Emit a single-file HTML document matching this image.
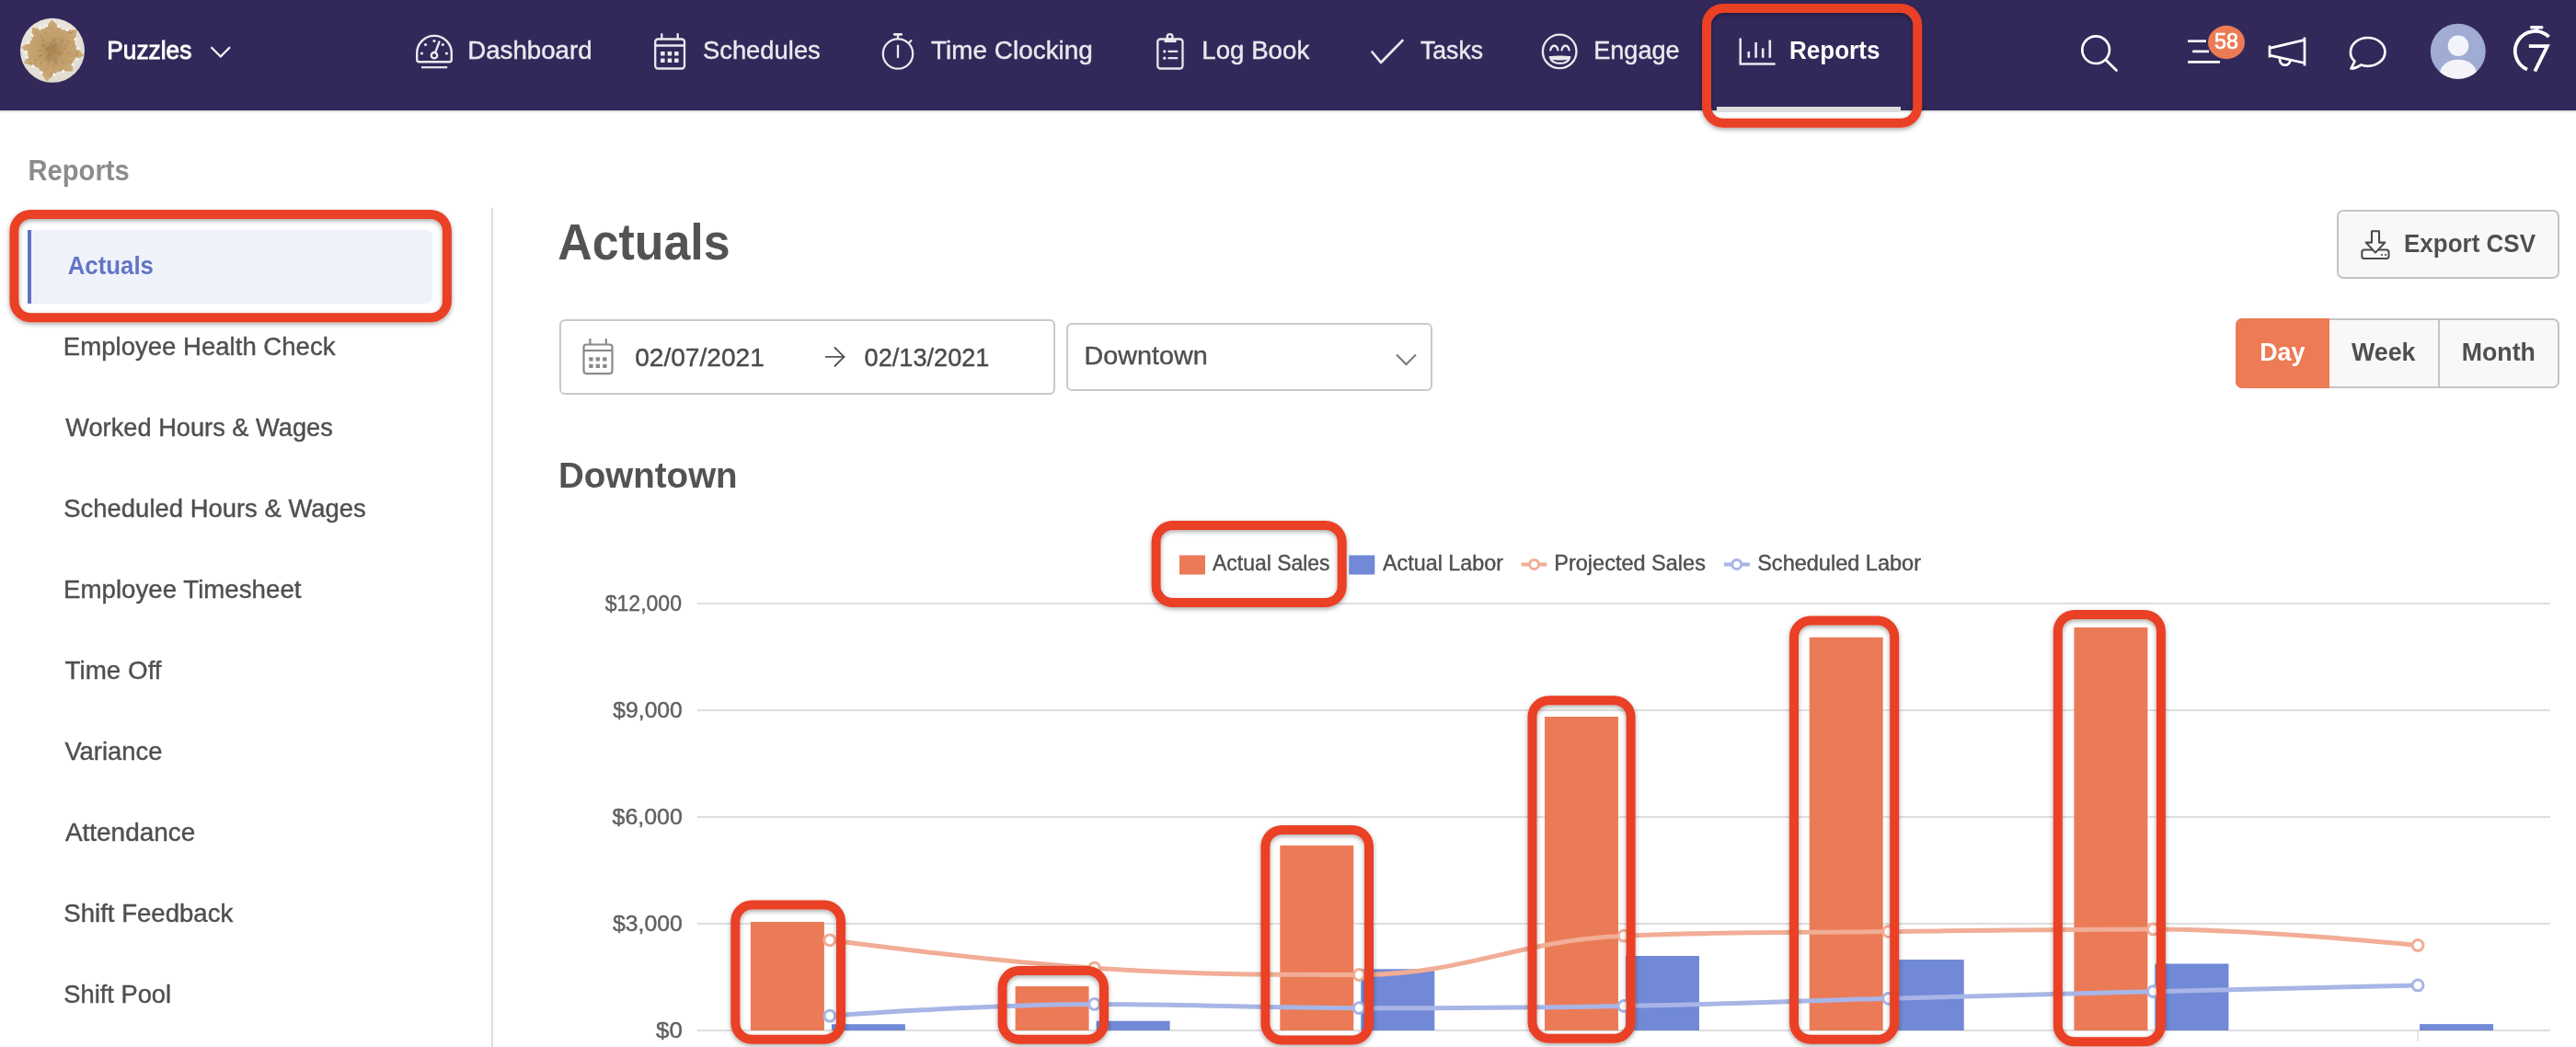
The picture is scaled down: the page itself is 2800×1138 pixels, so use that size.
<!DOCTYPE html>
<html><head><meta charset="utf-8"><title>Actuals</title>
<style>
html,body{margin:0;padding:0;background:#fff;}
body{width:2800px;height:1138px;overflow:hidden;position:relative;font-family:"Liberation Sans",sans-serif;}
.abs{position:absolute;box-sizing:border-box;}
#nav{left:0;top:0;width:2800px;height:120px;background:#32295a;border-bottom:0;}
#navline{left:0;top:120px;width:2800px;height:1.6px;background:#e2e2e2;}
#tabline{left:1866px;top:116px;width:200px;height:5.5px;background:#dedede;}
#divider{left:534.2px;top:226px;width:1.6px;height:912px;background:#dddddd;}
#active{left:30px;top:250px;width:440px;height:79.6px;background:#eff2fa;border-radius:0 7px 7px 0;border-left:4px solid #6272c6;}
#daterange{left:608.4px;top:346.5px;width:539px;height:82.8px;border:2px solid #c9c9c9;border-radius:6px;background:#fff;}
#select{left:1158.7px;top:350.6px;width:398.5px;height:74.7px;border:2px solid #c9c9c9;border-radius:6px;background:#fff;}
#export{left:2540px;top:228.3px;width:241.8px;height:75px;border:2px solid #c4c4c4;border-radius:7px;background:#f8f8f8;}
#seg{left:2430px;top:346px;width:351.5px;height:75.6px;border:2px solid #c4c4c4;border-radius:7px;background:#f8f8f8;overflow:hidden;}
#day{left:2430px;top:346px;width:101.6px;height:75.6px;background:#ec7b56;border-radius:7px 0 0 7px;}
#segdiv{left:2650.2px;top:348px;width:1.8px;height:71.6px;background:#c4c4c4;}
svg{position:absolute;left:0;top:0;will-change:transform;}
text{font-family:"Liberation Sans",sans-serif;}
</style></head>
<body>
<div class="abs" id="nav"></div>
<div class="abs" id="navline"></div>
<div class="abs" id="tabline"></div>
<div class="abs" id="divider"></div>
<div class="abs" id="active"></div>
<div class="abs" id="daterange"></div>
<div class="abs" id="select"></div>
<div class="abs" id="export"></div>
<div class="abs" id="seg"></div>
<div class="abs" id="day"></div>
<div class="abs" id="segdiv"></div>
<svg width="2800" height="1138" viewBox="0 0 2800 1138">
<defs>
<filter id="sh" x="-10%" y="-10%" width="120%" height="120%"><feDropShadow dx="0" dy="2" stdDeviation="2.5" flood-color="#000" flood-opacity="0.35"/></filter>
</defs>
<rect x="758" y="1119" width="2014" height="2" fill="#dedede"/><rect x="758" y="1003" width="2014" height="2" fill="#dedede"/><rect x="758" y="887" width="2014" height="2" fill="#dedede"/><rect x="758" y="771" width="2014" height="2" fill="#dedede"/><rect x="758" y="655" width="2014" height="2" fill="#dedede"/>
<rect x="901.1" y="1120" width="1.5" height="12" fill="#dedede"/><rect x="1188.8" y="1120" width="1.5" height="12" fill="#dedede"/><rect x="1476.5" y="1120" width="1.5" height="12" fill="#dedede"/><rect x="1764.2" y="1120" width="1.5" height="12" fill="#dedede"/><rect x="2052.0" y="1120" width="1.5" height="12" fill="#dedede"/><rect x="2339.7" y="1120" width="1.5" height="12" fill="#dedede"/><rect x="2627.4" y="1120" width="1.5" height="12" fill="#dedede"/>
<rect x="815.9" y="1002" width="80" height="118.0" fill="#eb7b57"/><rect x="903.9" y="1113.2" width="80" height="6.8" fill="#7189d6"/><rect x="1103.6" y="1072" width="80" height="48.0" fill="#eb7b57"/><rect x="1191.6" y="1109.7" width="80" height="10.3" fill="#7189d6"/><rect x="1391.3" y="919" width="80" height="201.0" fill="#eb7b57"/><rect x="1479.3" y="1053.3" width="80" height="66.7" fill="#7189d6"/><rect x="1679.0" y="779" width="80" height="341.0" fill="#eb7b57"/><rect x="1767.0" y="1039" width="80" height="81.0" fill="#7189d6"/><rect x="1966.7" y="692.7" width="80" height="427.3" fill="#eb7b57"/><rect x="2054.7" y="1043" width="80" height="77.0" fill="#7189d6"/><rect x="2254.4" y="682" width="80" height="438.0" fill="#eb7b57"/><rect x="2342.4" y="1047.5" width="80" height="72.5" fill="#7189d6"/><rect x="2630.1" y="1113.1" width="80" height="6.9" fill="#7189d6"/>
<path d="M901.86,1021.80 C901.86,1021.80 1074.49,1044.90 1189.57,1052.20 C1304.66,1059.50 1362.20,1059.50 1477.29,1059.50 C1592.37,1059.50 1649.91,1021.80 1765.00,1017.20 C1880.09,1012.60 1937.63,1014.04 2052.71,1012.60 C2167.80,1011.16 2225.34,1010.00 2340.43,1010.00 C2455.51,1010.00 2628.14,1027.50 2628.14,1027.50" fill="none" stroke="#f1ad95" stroke-width="5" stroke-linecap="round"/><path d="M901.86,1104.20 C901.86,1104.20 1074.49,1091.40 1189.57,1091.40 C1304.66,1091.40 1362.20,1095.70 1477.29,1095.70 C1592.37,1095.70 1649.91,1095.48 1765.00,1093.40 C1880.09,1091.32 1937.63,1088.44 2052.71,1085.30 C2167.80,1082.16 2225.34,1080.58 2340.43,1077.70 C2455.51,1074.82 2628.14,1070.90 2628.14,1070.90" fill="none" stroke="#a8b5e6" stroke-width="5" stroke-linecap="round"/><circle cx="901.9" cy="1021.8" r="5.9" fill="#fff" stroke="#f1ad95" stroke-width="3"/><circle cx="1189.6" cy="1052.2" r="5.9" fill="#fff" stroke="#f1ad95" stroke-width="3"/><circle cx="1477.3" cy="1059.5" r="5.9" fill="#fff" stroke="#f1ad95" stroke-width="3"/><circle cx="1765.0" cy="1017.2" r="5.9" fill="#fff" stroke="#f1ad95" stroke-width="3"/><circle cx="2052.7" cy="1012.6" r="5.9" fill="#fff" stroke="#f1ad95" stroke-width="3"/><circle cx="2340.4" cy="1010" r="5.9" fill="#fff" stroke="#f1ad95" stroke-width="3"/><circle cx="2628.1" cy="1027.5" r="5.9" fill="#fff" stroke="#f1ad95" stroke-width="3"/><circle cx="901.9" cy="1104.2" r="5.9" fill="#fff" stroke="#a8b5e6" stroke-width="3"/><circle cx="1189.6" cy="1091.4" r="5.9" fill="#fff" stroke="#a8b5e6" stroke-width="3"/><circle cx="1477.3" cy="1095.7" r="5.9" fill="#fff" stroke="#a8b5e6" stroke-width="3"/><circle cx="1765.0" cy="1093.4" r="5.9" fill="#fff" stroke="#a8b5e6" stroke-width="3"/><circle cx="2052.7" cy="1085.3" r="5.9" fill="#fff" stroke="#a8b5e6" stroke-width="3"/><circle cx="2340.4" cy="1077.7" r="5.9" fill="#fff" stroke="#a8b5e6" stroke-width="3"/><circle cx="2628.1" cy="1070.9" r="5.9" fill="#fff" stroke="#a8b5e6" stroke-width="3"/>
<rect x="1282" y="603.5" width="28" height="21" fill="#eb7b57"/>
<rect x="1466.3" y="603.5" width="28" height="21" fill="#7189d6"/>
<rect x="1653.6" y="611.5" width="27.7" height="4" fill="#f1ad95"/>
<circle cx="1667.6" cy="613.4" r="5" fill="#fff" stroke="#f1ad95" stroke-width="3"/>
<rect x="1874" y="611.5" width="27.8" height="4" fill="#a8b5e6"/>
<circle cx="1887.8" cy="613.4" r="5" fill="#fff" stroke="#a8b5e6" stroke-width="3"/>

<g fill="none" stroke="#e9e9ee" stroke-width="2.4" stroke-linecap="round" stroke-linejoin="round">
 <!-- dashboard -->
 <path d="M453.2,57.6 A18.8,18.8 0 0 1 490.8,57.6 V64.8 Q490.8,67.2 488.4,67.2 H455.6 Q453.2,67.2 453.2,64.8 Z"/>
 <line x1="458" y1="73.2" x2="486.2" y2="73.2" stroke-width="2.2" stroke-linecap="butt"/>
 <circle cx="472" cy="60.2" r="3.2"/>
 <line x1="473.1" y1="57.1" x2="477.5" y2="45.5"/>
</g>
<g fill="#e9e9ee">
 <circle cx="472" cy="44.5" r="1.6"/><circle cx="462.5" cy="48.5" r="1.6"/><circle cx="481.3" cy="48.5" r="1.6"/>
 <circle cx="458.5" cy="58" r="1.6"/><circle cx="485.4" cy="58" r="1.6"/>
</g>
<g fill="none" stroke="#e9e9ee" stroke-width="2.3" stroke-linecap="round" stroke-linejoin="round">
 <!-- schedules -->
 <rect x="712.2" y="42.5" width="31.8" height="32" rx="3"/>
 <line x1="712.2" y1="49.5" x2="744" y2="49.5"/>
 <line x1="719.3" y1="37.2" x2="719.3" y2="42"/><line x1="736.7" y1="37.2" x2="736.7" y2="42"/>
</g>
<g fill="#e9e9ee">
 <rect x="718" y="56" width="4.6" height="4.6" rx="0.6"/><rect x="725.6" y="56" width="4.6" height="4.6" rx="0.6"/><rect x="733" y="56" width="4.6" height="4.6" rx="0.6"/>
 <rect x="718" y="63.4" width="4.6" height="4.6" rx="0.6"/><rect x="725.6" y="63.4" width="4.6" height="4.6" rx="0.6"/><rect x="733" y="63.4" width="4.6" height="4.6" rx="0.6"/>
</g>
<g fill="none" stroke="#e9e9ee" stroke-width="2.3" stroke-linecap="round" stroke-linejoin="round">
 <!-- time clocking -->
 <circle cx="976" cy="58.5" r="16.2"/>
 <line x1="972.2" y1="37.4" x2="979.8" y2="37.4" stroke-width="2.6"/><line x1="976" y1="37.5" x2="976" y2="42"/>
 <line x1="976" y1="49.6" x2="976" y2="62.2"/>
 <line x1="987.9" y1="46.7" x2="990.3" y2="44.2"/>
 <!-- log book -->
 <rect x="1258.3" y="42.5" width="27.2" height="32" rx="3"/>
 <line x1="1270.5" y1="55.9" x2="1279.3" y2="55.9"/><line x1="1270.5" y1="63.2" x2="1279.3" y2="63.2"/>
 <circle cx="1271.6" cy="40" r="2.9"/>
 <!-- tasks -->
 <polyline points="1491.5,56.5 1501,68 1524.5,44" stroke-width="2.6"/>
 <!-- engage -->
 <circle cx="1695.2" cy="55.9" r="18.3"/>
 <path d="M1685.3,54.4 C1686.4,48.2 1692.4,48.2 1693.4,54.4" stroke-width="2.3"/><path d="M1697.6,54.4 C1698.6,48.2 1704.6,48.2 1705.6,54.4" stroke-width="2.3"/>
 <path d="M1684.8,62 Q1686.5,68.9 1695.6,68.9 Q1704.7,68.9 1706.4,62" stroke-width="2.2"/>
 <path d="M1684,61.2 Q1695.6,59.6 1707.2,61.2 L1706,64.4 Q1695.6,66.6 1685.2,64.4 Z" fill="#e9e9ee" stroke="none"/>
 <!-- reports -->
 <polyline points="1891.7,41.5 1891.7,69.5 1929.6,69.5" stroke-linecap="butt" stroke-linejoin="miter" stroke-width="2.5"/>
 <line x1="1900.8" y1="56" x2="1900.8" y2="62.8" stroke-width="2.6" stroke-linecap="butt"/>
 <line x1="1908.6" y1="46" x2="1908.6" y2="62.8" stroke-width="2.6" stroke-linecap="butt"/>
 <line x1="1916.2" y1="52.4" x2="1916.2" y2="62.8" stroke-width="2.6" stroke-linecap="butt"/>
 <line x1="1923.8" y1="43.6" x2="1923.8" y2="62.8" stroke-width="2.6" stroke-linecap="butt"/>
</g>
<g fill="#e9e9ee">
 <rect x="1265.5" y="42.5" width="13" height="3.6"/>
 <circle cx="1265.8" cy="55.9" r="1.6"/><circle cx="1265.8" cy="63.2" r="1.6"/>
 
</g>
<g fill="none" stroke="#ffffff" stroke-width="2.7" stroke-linecap="butt" stroke-linejoin="round">
 <!-- search -->
 <circle cx="2278.1" cy="54.2" r="14.8"/>
 <line x1="2289.3" y1="65.5" x2="2300.5" y2="76.5" stroke-linecap="round"/>
 <!-- lines -->
 <line x1="2378.1" y1="44.7" x2="2398" y2="44.7"/><line x1="2383.2" y1="55.9" x2="2401" y2="55.9"/><line x1="2378.1" y1="67.4" x2="2412.9" y2="67.4"/>
 <!-- megaphone -->
 <path d="M2467,49.4 V62.4 M2505,40.4 V71.5 M2467,52.4 L2505,43.4 M2467,60.1 L2505,68.5"/>
 <path d="M2478.3,63 A5.8,5.8 0 1 0 2489.5,65.8"/>
 <!-- chat -->
 <path d="M2559.5,66.5 C2554,62 2555,57 2555,56.4 C2555,47.8 2563.4,41 2573.7,41 C2584,41 2592.4,47.8 2592.4,56.4 C2592.4,65 2584,71.8 2573.7,71.8 C2571,71.8 2568.5,71.3 2566.5,70.5 C2563,72.8 2559,74.5 2555.5,74.5 Z"/>
 <!-- 7shifts -->
 <path d="M2747,75.5 A21.65,21.65 0 1 1 2770.5,40" stroke-width="3.8"/>
 <path d="M2748.8,50.1 L2768.8,50.1 L2755.3,77.5" stroke-width="3.8" stroke-linejoin="miter"/>
 <line x1="2757.3" y1="31" x2="2757.3" y2="34" stroke-width="3.5"/>
</g>
<rect x="2750" y="28" width="14.5" height="3.4" rx="1.7" fill="#fff"/>
<!-- badge -->
<ellipse cx="2420" cy="46" rx="20" ry="18.2" fill="#ec7b55"/>
<!-- avatar -->
<clipPath id="avc"><circle cx="2671.8" cy="55.8" r="30"/></clipPath>
<circle cx="2671.8" cy="55.8" r="30" fill="#a0acd3"/>
<g clip-path="url(#avc)" fill="#f3f4fa">
 <circle cx="2672" cy="49.8" r="11.3"/>
 <ellipse cx="2672" cy="80" rx="20" ry="15.3"/>
</g>
<!-- logo -->
<clipPath id="logoc"><circle cx="57" cy="54.8" r="35"/></clipPath>
<radialGradient id="lbg" cx="0.45" cy="0.4" r="0.7"><stop offset="0" stop-color="#f4f2ed"/><stop offset="1" stop-color="#dcd7cb"/></radialGradient>
<radialGradient id="lpz" cx="0.5" cy="0.5" r="0.5"><stop offset="0" stop-color="#a98250"/><stop offset="0.35" stop-color="#bd9a68"/><stop offset="1" stop-color="#cdab79"/></radialGradient>
<circle cx="57" cy="54.8" r="35" fill="url(#lbg)"/>
<g clip-path="url(#logoc)">
 <polygon points="56.5,21.2 67.4,32.5 83.7,32.5 81.2,48.2 91.0,60.5 79.3,66.2 79.0,77.5 63.1,77.4 50.5,88.5 41.8,73.8 25.8,68.5 31.0,59.0 23.5,51.5 34.7,43.6 35.0,30.0 47.9,31.5" fill="url(#lpz)"/>
 <g stroke="#8a683c" stroke-width="0.8" opacity="0.5"><line x1="57.7" y1="70.6" x2="59.2" y2="74.1"/><line x1="53.9" y1="52.4" x2="49.9" y2="54.5"/><line x1="56.0" y1="62.8" x2="52.7" y2="63.6"/><line x1="63.7" y1="43.1" x2="65.6" y2="41.6"/><line x1="40.8" y1="37.2" x2="38.2" y2="33.9"/><line x1="54.8" y1="51.8" x2="55.5" y2="48.1"/><line x1="55.6" y1="57.6" x2="52.4" y2="58.6"/><line x1="51.8" y1="31.5" x2="53.5" y2="27.0"/><line x1="39.1" y1="68.5" x2="35.8" y2="72.0"/><line x1="59.7" y1="51.9" x2="59.4" y2="49.3"/><line x1="69.1" y1="52.2" x2="72.0" y2="52.5"/><line x1="44.9" y1="54.5" x2="41.3" y2="55.7"/><line x1="35.3" y1="42.6" x2="32.7" y2="38.5"/><line x1="73.1" y1="34.0" x2="75.3" y2="32.9"/><line x1="73.2" y1="34.9" x2="76.9" y2="35.6"/><line x1="54.9" y1="47.9" x2="57.1" y2="44.9"/><line x1="55.7" y1="58.5" x2="51.2" y2="60.6"/><line x1="75.2" y1="66.6" x2="77.5" y2="67.4"/><line x1="50.7" y1="75.4" x2="48.7" y2="76.1"/><line x1="54.2" y1="52.9" x2="53.3" y2="50.1"/><line x1="75.9" y1="37.0" x2="79.6" y2="33.6"/><line x1="55.1" y1="58.7" x2="53.8" y2="60.3"/><line x1="60.5" y1="66.5" x2="60.6" y2="69.0"/><line x1="79.4" y1="61.2" x2="84.1" y2="60.2"/><line x1="65.6" y1="48.1" x2="68.2" y2="45.6"/><line x1="46.1" y1="41.7" x2="44.2" y2="38.4"/><line x1="70.2" y1="49.7" x2="73.7" y2="47.5"/><line x1="57.2" y1="64.5" x2="54.0" y2="65.9"/><line x1="54.3" y1="54.3" x2="50.6" y2="54.0"/><line x1="73.8" y1="57.2" x2="75.7" y2="58.2"/><line x1="47.0" y1="45.2" x2="46.1" y2="42.3"/><line x1="51.0" y1="35.3" x2="48.9" y2="35.2"/><line x1="44.8" y1="31.7" x2="41.8" y2="30.2"/><line x1="48.1" y1="49.5" x2="45.3" y2="48.8"/><line x1="45.0" y1="67.4" x2="44.3" y2="70.4"/><line x1="56.9" y1="52.4" x2="58.2" y2="48.4"/><line x1="53.7" y1="62.0" x2="51.2" y2="63.1"/><line x1="61.4" y1="66.9" x2="61.2" y2="69.2"/><line x1="52.0" y1="64.3" x2="48.8" y2="65.1"/><line x1="60.3" y1="50.1" x2="61.3" y2="46.2"/><line x1="66.5" y1="46.2" x2="66.8" y2="43.9"/><line x1="49.8" y1="53.7" x2="47.3" y2="50.0"/><line x1="60.1" y1="63.2" x2="58.7" y2="66.8"/><line x1="60.2" y1="45.0" x2="58.5" y2="42.7"/><line x1="58.9" y1="46.6" x2="58.5" y2="43.3"/><line x1="45.8" y1="60.9" x2="43.7" y2="59.5"/><line x1="82.1" y1="55.7" x2="84.7" y2="60.0"/><line x1="32.9" y1="65.3" x2="30.9" y2="63.6"/><line x1="55.9" y1="32.1" x2="57.2" y2="28.8"/><line x1="53.9" y1="65.2" x2="54.9" y2="67.2"/><line x1="48.7" y1="50.1" x2="48.3" y2="48.1"/><line x1="72.4" y1="44.0" x2="76.5" y2="46.2"/><line x1="69.8" y1="45.3" x2="68.4" y2="41.3"/><line x1="61.0" y1="63.4" x2="61.2" y2="66.9"/><line x1="34.7" y1="68.1" x2="31.7" y2="68.9"/><line x1="56.1" y1="78.5" x2="56.3" y2="82.9"/><line x1="52.4" y1="60.6" x2="49.4" y2="63.9"/><line x1="66.8" y1="74.2" x2="64.3" y2="77.8"/><line x1="57.5" y1="53.0" x2="60.8" y2="49.8"/><line x1="64.9" y1="57.7" x2="68.3" y2="56.7"/><line x1="44.3" y1="61.4" x2="42.3" y2="61.0"/><line x1="61.4" y1="56.7" x2="63.1" y2="55.4"/><line x1="79.6" y1="51.3" x2="80.7" y2="48.0"/><line x1="52.5" y1="64.0" x2="52.4" y2="68.0"/><line x1="47.1" y1="49.3" x2="44.2" y2="50.1"/><line x1="67.8" y1="66.1" x2="68.5" y2="69.2"/><line x1="62.2" y1="58.1" x2="65.9" y2="58.8"/><line x1="58.8" y1="43.7" x2="62.1" y2="41.6"/><line x1="46.2" y1="59.7" x2="42.5" y2="61.5"/><line x1="39.5" y1="64.3" x2="37.3" y2="65.8"/></g>
 <circle cx="63.6" cy="28.5" r="1.7" fill="#f6f4ef"/><circle cx="73.1" cy="32.5" r="1.7" fill="#f6f4ef"/><circle cx="82.1" cy="42.7" r="1.7" fill="#f6f4ef"/><circle cx="84.6" cy="52.5" r="1.7" fill="#f6f4ef"/><circle cx="83.4" cy="64.2" r="1.7" fill="#f6f4ef"/><circle cx="79.2" cy="70.2" r="1.7" fill="#f6f4ef"/><circle cx="68.7" cy="77.4" r="1.7" fill="#f6f4ef"/><circle cx="58.7" cy="81.3" r="1.7" fill="#f6f4ef"/><circle cx="44.9" cy="78.9" r="1.7" fill="#f6f4ef"/><circle cx="36.2" cy="71.9" r="1.7" fill="#f6f4ef"/><circle cx="29.2" cy="62.3" r="1.7" fill="#f6f4ef"/><circle cx="28.4" cy="56.4" r="1.7" fill="#f6f4ef"/><circle cx="30.8" cy="46.4" r="1.7" fill="#f6f4ef"/><circle cx="34.8" cy="38.8" r="1.7" fill="#f6f4ef"/><circle cx="43.4" cy="31.0" r="1.7" fill="#f6f4ef"/><circle cx="50.9" cy="27.9" r="1.7" fill="#f6f4ef"/>
</g>
<!-- puzzles chevron -->
<polyline points="229.5,51.3 239.8,61.5 250,51.3" fill="none" stroke="#fff" stroke-width="2.2"/>
<!-- date calendar -->
<g fill="none" stroke="#8a8a8a" stroke-width="2.2">
 <rect x="634.5" y="374.5" width="31" height="31.6" rx="3"/>
 <line x1="634.5" y1="381" x2="665.5" y2="381"/>
 <line x1="641.4" y1="368" x2="641.4" y2="374"/><line x1="658.8" y1="368" x2="658.8" y2="374"/>
</g>
<g fill="#8a8a8a">
 <rect x="640.2" y="388.2" width="4.4" height="4.4" rx="0.5"/><rect x="647.6" y="388.2" width="4.4" height="4.4" rx="0.5"/><rect x="655.1" y="388.2" width="4.4" height="4.4" rx="0.5"/>
 <rect x="640.2" y="395.7" width="4.4" height="4.4" rx="0.5"/><rect x="647.6" y="395.7" width="4.4" height="4.4" rx="0.5"/><rect x="655.1" y="395.7" width="4.4" height="4.4" rx="0.5"/>
</g>
<!-- arrow -->
<g fill="none" stroke="#555" stroke-width="1.9" stroke-linecap="round" stroke-linejoin="round">
 <line x1="897.8" y1="387.9" x2="917.5" y2="387.9"/>
 <polyline points="907.5,378 917.5,387.9 907.5,397.8"/>
</g>
<!-- select chevron -->
<polyline points="1518,385.5 1528.5,396 1539,385.5" fill="none" stroke="#777" stroke-width="2"/>
<!-- export icon -->
<g fill="none" stroke="#4a4a4a" stroke-width="2" stroke-linejoin="round">
 <rect x="2567.3" y="271.4" width="29.2" height="9.5" rx="2.5"/>
 <path d="M2578,251.2 H2586 V263.6 H2592.3 L2582,274.6 L2571.7,263.6 H2578 Z" fill="#f8f8f8" stroke-width="2.1"/>
</g>
<g fill="#4a4a4a"><circle cx="2588.9" cy="277" r="1.1"/><circle cx="2593" cy="277" r="1.1"/></g>

<text x="116.30" y="64.3" font-size="28.34" fill="#ffffff" textLength="92.08" lengthAdjust="spacingAndGlyphs" stroke="#fff" stroke-width="0.9">Puzzles</text><text x="508.16" y="64.0" font-size="27.62" fill="#e9e9ee" textLength="135.44" lengthAdjust="spacingAndGlyphs" stroke="#e9e9ee" stroke-width="0.4">Dashboard</text><text x="763.96" y="64.0" font-size="27.62" fill="#e9e9ee" textLength="127.84" lengthAdjust="spacingAndGlyphs" stroke="#e9e9ee" stroke-width="0.4">Schedules</text><text x="1012.10" y="64.0" font-size="27.62" fill="#e9e9ee" textLength="175.74" lengthAdjust="spacingAndGlyphs" stroke="#e9e9ee" stroke-width="0.4">Time Clocking</text><text x="1306.26" y="64.0" font-size="27.62" fill="#e9e9ee" textLength="116.98" lengthAdjust="spacingAndGlyphs" stroke="#e9e9ee" stroke-width="0.4">Log Book</text><text x="1544.00" y="64.0" font-size="27.62" fill="#e9e9ee" textLength="68.04" lengthAdjust="spacingAndGlyphs" stroke="#e9e9ee" stroke-width="0.4">Tasks</text><text x="1732.16" y="64.0" font-size="27.62" fill="#e9e9ee" textLength="93.50" lengthAdjust="spacingAndGlyphs" stroke="#e9e9ee" stroke-width="0.4">Engage</text><text x="1945.02" y="64.0" font-size="27.62" fill="#ffffff" textLength="98.40" lengthAdjust="spacingAndGlyphs" font-weight="bold">Reports</text><text x="30.54" y="196.0" font-size="31.98" fill="#8c8c8c" textLength="110.16" lengthAdjust="spacingAndGlyphs" font-weight="bold">Reports</text><text x="73.72" y="298.2" font-size="28.20" fill="#6274c4" textLength="93.22" lengthAdjust="spacingAndGlyphs" font-weight="bold">Actuals</text><text x="68.88" y="385.9" font-size="27.47" fill="#4f4f4f" textLength="295.60" lengthAdjust="spacingAndGlyphs" stroke="#4f4f4f" stroke-width="0.4">Employee Health Check</text><text x="71.28" y="473.9" font-size="27.47" fill="#4f4f4f" textLength="290.52" lengthAdjust="spacingAndGlyphs" stroke="#4f4f4f" stroke-width="0.4">Worked Hours &amp; Wages</text><text x="69.30" y="561.9" font-size="27.47" fill="#4f4f4f" textLength="328.50" lengthAdjust="spacingAndGlyphs" stroke="#4f4f4f" stroke-width="0.4">Scheduled Hours &amp; Wages</text><text x="69.04" y="649.9" font-size="27.47" fill="#4f4f4f" textLength="258.44" lengthAdjust="spacingAndGlyphs" stroke="#4f4f4f" stroke-width="0.4">Employee Timesheet</text><text x="70.62" y="737.9" font-size="27.47" fill="#4f4f4f" textLength="104.96" lengthAdjust="spacingAndGlyphs" stroke="#4f4f4f" stroke-width="0.4">Time Off</text><text x="70.38" y="825.9" font-size="27.47" fill="#4f4f4f" textLength="106.04" lengthAdjust="spacingAndGlyphs" stroke="#4f4f4f" stroke-width="0.4">Variance</text><text x="70.90" y="913.9" font-size="27.47" fill="#4f4f4f" textLength="141.42" lengthAdjust="spacingAndGlyphs" stroke="#4f4f4f" stroke-width="0.4">Attendance</text><text x="69.30" y="1001.9" font-size="27.47" fill="#4f4f4f" textLength="183.94" lengthAdjust="spacingAndGlyphs" stroke="#4f4f4f" stroke-width="0.4">Shift Feedback</text><text x="69.30" y="1089.9" font-size="27.47" fill="#4f4f4f" textLength="116.78" lengthAdjust="spacingAndGlyphs" stroke="#4f4f4f" stroke-width="0.4">Shift Pool</text><text x="606.16" y="281.8" font-size="54.80" fill="#535353" textLength="187.44" lengthAdjust="spacingAndGlyphs" font-weight="bold">Actuals</text><text x="690.20" y="397.9" font-size="28.05" fill="#4a4a4a" textLength="140.60" lengthAdjust="spacingAndGlyphs" stroke="#4a4a4a" stroke-width="0.4">02/07/2021</text><text x="939.58" y="398.0" font-size="28.05" fill="#4a4a4a" textLength="135.84" lengthAdjust="spacingAndGlyphs" stroke="#4a4a4a" stroke-width="0.4">02/13/2021</text><text x="1178.50" y="395.9" font-size="27.33" fill="#4f4f4f" textLength="134.10" lengthAdjust="spacingAndGlyphs" stroke="#4f4f4f" stroke-width="0.4">Downtown</text><text x="606.98" y="529.6" font-size="38.52" fill="#535353" textLength="194.66" lengthAdjust="spacingAndGlyphs" font-weight="bold">Downtown</text><text x="2613.02" y="273.9" font-size="27.03" fill="#4f4f4f" textLength="142.98" lengthAdjust="spacingAndGlyphs" font-weight="bold">Export CSV</text><text x="2456.16" y="392.2" font-size="28.34" fill="#ffffff" textLength="49.22" lengthAdjust="spacingAndGlyphs" font-weight="bold">Day</text><text x="2556.00" y="392.1" font-size="27.33" fill="#4f4f4f" textLength="69.52" lengthAdjust="spacingAndGlyphs" font-weight="bold">Week</text><text x="2675.68" y="392.1" font-size="27.33" fill="#4f4f4f" textLength="80.26" lengthAdjust="spacingAndGlyphs" font-weight="bold">Month</text><text x="1318.00" y="619.7" font-size="23.26" fill="#4f4f4f" textLength="127.52" lengthAdjust="spacingAndGlyphs" stroke="#4f4f4f" stroke-width="0.4">Actual Sales</text><text x="1503.00" y="619.7" font-size="23.26" fill="#4f4f4f" textLength="131.00" lengthAdjust="spacingAndGlyphs" stroke="#4f4f4f" stroke-width="0.4">Actual Labor</text><text x="1689.30" y="619.7" font-size="23.26" fill="#4f4f4f" textLength="164.60" lengthAdjust="spacingAndGlyphs" stroke="#4f4f4f" stroke-width="0.4">Projected Sales</text><text x="1910.20" y="619.7" font-size="23.26" fill="#4f4f4f" textLength="177.80" lengthAdjust="spacingAndGlyphs" stroke="#4f4f4f" stroke-width="0.4">Scheduled Labor</text><text x="657.76" y="664.4" font-size="23.60" fill="#606060" textLength="83.24" lengthAdjust="spacingAndGlyphs" stroke="#606060" stroke-width="0.4">$12,000</text><text x="666.38" y="780.4" font-size="23.60" fill="#606060" textLength="75.42" lengthAdjust="spacingAndGlyphs" stroke="#606060" stroke-width="0.4">$9,000</text><text x="665.52" y="896.4" font-size="23.60" fill="#606060" textLength="76.28" lengthAdjust="spacingAndGlyphs" stroke="#606060" stroke-width="0.4">$6,000</text><text x="666.00" y="1012.4" font-size="23.60" fill="#606060" textLength="75.80" lengthAdjust="spacingAndGlyphs" stroke="#606060" stroke-width="0.4">$3,000</text><text x="713.00" y="1128.4" font-size="23.60" fill="#606060" textLength="28.80" lengthAdjust="spacingAndGlyphs" stroke="#606060" stroke-width="0.4">$0</text><text x="2407.00" y="52.7" font-size="23.60" fill="#ffffff" textLength="26.00" lengthAdjust="spacingAndGlyphs" stroke="#fff" stroke-width="0.7">58</text>
<g filter="url(#sh)"><rect x="1855.0" y="9.1" width="229.2" height="124.6" rx="18" ry="18" fill="none" stroke="#e94025" stroke-width="10"/><rect x="15.4" y="232.9" width="470.5" height="112.4" rx="18" ry="18" fill="none" stroke="#e94025" stroke-width="10"/><rect x="1256.6" y="570.9" width="202.1" height="84.1" rx="18" ry="18" fill="none" stroke="#e94025" stroke-width="10"/><rect x="799.3" y="983.6" width="114.7" height="146.2" rx="18" ry="18" fill="none" stroke="#e94025" stroke-width="10"/><rect x="1089.6" y="1055.0" width="110.4" height="74.7" rx="18" ry="18" fill="none" stroke="#e94025" stroke-width="10"/><rect x="1375.4" y="902.0" width="112.6" height="228.6" rx="18" ry="18" fill="none" stroke="#e94025" stroke-width="10"/><rect x="1665.5" y="761.3" width="107.1" height="367.4" rx="18" ry="18" fill="none" stroke="#e94025" stroke-width="10"/><rect x="1950.0" y="674.5" width="109.2" height="455.3" rx="18" ry="18" fill="none" stroke="#e94025" stroke-width="10"/><rect x="2236.8" y="667.9" width="112.1" height="464.4" rx="18" ry="18" fill="none" stroke="#e94025" stroke-width="10"/></g>
</svg>
</body></html>
